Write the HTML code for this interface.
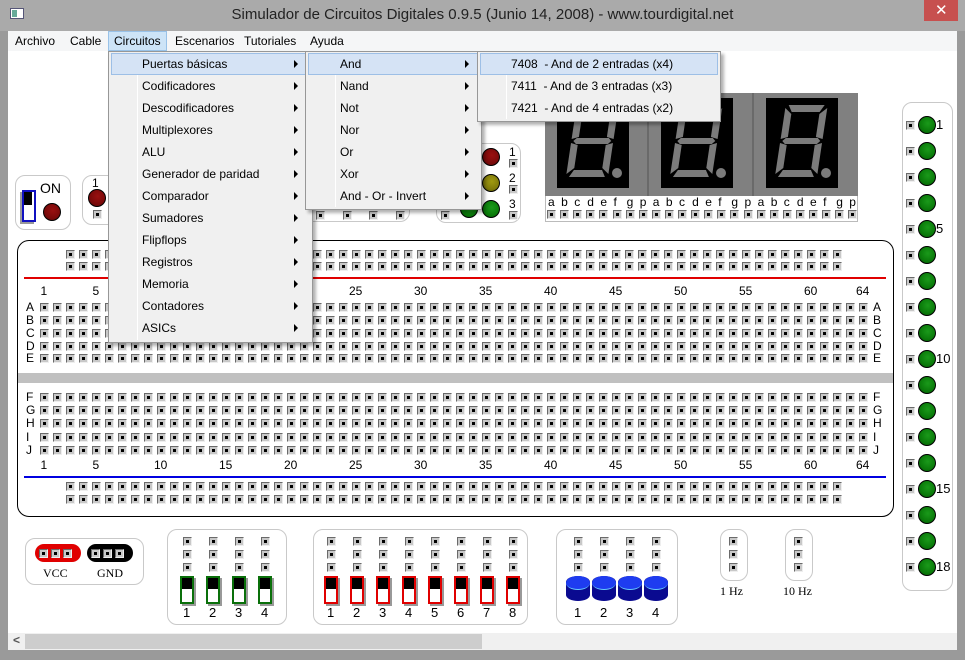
<!DOCTYPE html>
<html><head><meta charset="utf-8"><style>
*{margin:0;padding:0;box-sizing:border-box}
body{width:965px;height:660px;overflow:hidden;background:#aaaaaa;font-family:"Liberation Sans",sans-serif;position:relative}
.a{position:absolute}
.h{position:absolute;width:9px;height:9px;background:#c8c8c8;border:1px solid #6a6a6a;border-right-color:#eee;border-bottom-color:#eee}
.h::after{content:"";position:absolute;left:2px;top:2px;width:3px;height:3px;background:#000}
.box{position:absolute;border:1px solid #c9c9c9;border-radius:10px;background:transparent}
.t{position:absolute;font-size:13px;color:#000;white-space:nowrap}
.led{position:absolute;width:18px;height:18px;border-radius:50%;border:1px solid #000}
.g{background:radial-gradient(circle at 55% 40%,#1a9a1a 0,#0a7a0a 60%,#064d06 100%)}
.r{background:radial-gradient(circle at 55% 40%,#9a1010 0,#7a0a0a 60%,#4d0606 100%)}
.y{background:radial-gradient(circle at 55% 40%,#a09a10 0,#807a0a 60%,#4d4d06 100%)}
.sw{position:absolute;width:14px;height:28px;border:2px solid;background:#fff;box-shadow:2px 2px 0 #999}
.sw::before{content:"";position:absolute;left:0;top:0;width:10px;height:11px;background:#000}
.menu{position:absolute;background:#f0f0f0;border:1px solid #979797;box-shadow:3px 3px 3px rgba(0,0,0,.3);font-size:12px}
.menu .gut{position:absolute;top:2px;bottom:2px;width:1px;background:#e2e3e3;border-right:1px solid #fff}
.mi{position:absolute;height:22px;line-height:22px;color:#000;white-space:nowrap}
.hl{position:absolute;height:22px;background:#d5e3f5;border:1px solid #9dbfe6}
.arr{position:absolute;width:0;height:0;border-left:4px solid #000;border-top:4px solid transparent;border-bottom:4px solid transparent}
.serif{font-family:"Liberation Serif",serif}
</style></head><body>
<div class="a" style="left:0;top:0;width:965px;height:31px;background:#aaaaaa"></div>
<div class="a" style="left:10px;top:8px;width:14px;height:11px;background:#fff;border:1px solid #557"></div>
<div class="a" style="left:12px;top:10px;width:5px;height:7px;background:#6a9"></div>
<div class="t" style="left:0;width:965px;text-align:center;top:6px;font-size:15px;color:#222">Simulador de Circuitos Digitales 0.9.5 (Junio 14, 2008) - www.tourdigital.net</div>
<div class="a" style="left:924px;top:0;width:34px;height:21px;background:#c7504f"></div>
<div class="t" style="left:935px;top:1px;color:#fff;font-size:15px">✕</div>
<div class="a" style="left:8px;top:31px;width:949px;height:20px;background:#f5f6f7"></div>
<div class="a" style="left:108px;top:31px;width:59px;height:20px;background:#cde4f7;border:1px solid #99c2e8"></div>
<div class="t" style="left:15px;top:34px;font-size:12px">Archivo</div>
<div class="t" style="left:70px;top:34px;font-size:12px">Cable</div>
<div class="t" style="left:114px;top:34px;font-size:12px">Circuitos</div>
<div class="t" style="left:175px;top:34px;font-size:12px">Escenarios</div>
<div class="t" style="left:244px;top:34px;font-size:12px">Tutoriales</div>
<div class="t" style="left:310px;top:34px;font-size:12px">Ayuda</div>
<div class="a" style="left:8px;top:51px;width:949px;height:582px;background:#fff"></div>
<div class="a" style="left:8px;top:633px;width:949px;height:17px;background:#f0f0f0"></div>
<div class="a" style="left:25px;top:634px;width:457px;height:15px;background:#cdcdcd"></div>
<div class="t" style="left:13px;top:633px;font-size:12px;color:#555;font-weight:bold">&lt;</div>
<div class="a" style="left:0;top:650px;width:965px;height:10px;background:#9a9a9a"></div>
<div class="a" style="left:957px;top:31px;width:8px;height:620px;background:#9a9a9a"></div>
<div class="a" style="left:0;top:31px;width:8px;height:620px;background:#9a9a9a"></div>

<div class="box" style="left:17px;top:240px;width:877px;height:277px;border:1px solid #000;border-radius:12px"></div>
<div class="a" style="left:18px;top:373px;width:875px;height:10px;background:#c0c0c0"></div>
<div class="a" style="left:24px;top:277px;width:862px;height:2px;background:#e00000"></div>
<div class="a" style="left:24px;top:476px;width:862px;height:2px;background:#0000e0"></div>

<div class="a" style="left:545px;top:93px;width:313px;height:129px;border:1px solid #bbb;background:#fff"></div>
<div class="a" style="left:545px;top:93px;width:313px;height:103px;background:#808080"></div>
<svg class="a" style="left:545px;top:93px" width="313" height="103" id="seg"></svg>

<div class="box" style="left:15px;top:175px;width:56px;height:55px"></div>
<div class="a" style="left:22px;top:190px;width:14px;height:32px;border:2px solid #1010c0;background:#fff;box-shadow:-2px 2px 0 #999"></div>
<div class="a" style="left:24px;top:192px;width:8px;height:13px;background:#000"></div>
<div class="t" style="left:40px;top:180px;font-size:14px">ON</div>
<div class="led r" style="left:43px;top:203px"></div>
<div class="box" style="left:82px;top:175px;width:60px;height:50px"></div>
<div class="t" style="left:92px;top:176px;font-size:12px">1</div>
<div class="led r" style="left:88px;top:189px"></div>
<div class="box" style="left:295px;top:180px;width:115px;height:42px"></div>
<div class="box" style="left:436px;top:143px;width:85px;height:80px"></div>
<div class="led r" style="left:482px;top:148px"></div>
<div class="led y" style="left:482px;top:174px"></div>
<div class="led g" style="left:482px;top:200px"></div>
<div class="led g" style="left:460px;top:200px"></div>
<div class="t" style="left:509px;top:145px;font-size:12px">1</div>
<div class="t" style="left:509px;top:171px;font-size:12px">2</div>
<div class="t" style="left:509px;top:197px;font-size:12px">3</div>

<div class="box" style="left:902px;top:102px;width:51px;height:489px"></div>

<div class="box" style="left:25px;top:538px;width:119px;height:47px"></div>
<div class="a" style="left:35px;top:544px;width:46px;height:18px;background:#e00000;border-radius:9px"></div>
<div class="a" style="left:87px;top:544px;width:46px;height:18px;background:#000;border-radius:9px"></div>
<div class="t serif" style="left:43px;top:566px;font-size:12px">VCC</div>
<div class="t serif" style="left:97px;top:566px;font-size:12px">GND</div>
<div class="box" style="left:167px;top:529px;width:120px;height:96px"></div>
<div class="box" style="left:313px;top:529px;width:215px;height:96px"></div>
<div class="box" style="left:556px;top:529px;width:122px;height:96px"></div>
<div class="box" style="left:720px;top:529px;width:28px;height:52px"></div>
<div class="box" style="left:785px;top:529px;width:28px;height:52px"></div>
<div class="t serif" style="left:720px;top:584px;font-size:12px">1 Hz</div>
<div class="t serif" style="left:783px;top:584px;font-size:12px">10 Hz</div>
<div id="bb"></div>
<div id="bc"></div>

<div class="menu" style="left:108px;top:51px;width:205px;height:292px">
<div class="gut" style="left:28px"></div>
<div class="hl" style="left:2px;top:1px;width:199px"></div>
</div>
<div class="menu" style="left:305px;top:51px;width:177px;height:159px">
<div class="gut" style="left:29px"></div>
<div class="hl" style="left:2px;top:1px;width:171px"></div>
</div>
<div class="menu" style="left:477px;top:51px;width:244px;height:71px">
<div class="gut" style="left:28px"></div>
<div class="hl" style="left:2px;top:1px;width:238px"></div>
</div>
<div id="mn"></div>

<script>
var H='';
function h(x,y){H+='<div class="h" style="left:'+(x-4)+'px;top:'+(y-4)+'px"></div>';}
function t(x,y,s,st){H+='<div class="t" style="left:'+x+'px;top:'+y+'px;'+(st||'')+'">'+s+'</div>';}
var cx=function(c){return 44+(c-1)*13;};
for(var c=3;c<=62;c++){h(cx(c),254);h(cx(c),266);h(cx(c),486);h(cx(c),499);}
var ra=[307,320,333,346,358],rb=[397,410,423,437,450],L1='ABCDE',L2='FGHIJ';
for(var r=0;r<5;r++){for(var c=1;c<=64;c++){h(cx(c),ra[r]);h(cx(c),rb[r]);}
t(26,ra[r]-7,L1[r],'font-size:12px');t(873,ra[r]-7,L1[r],'font-size:12px');
t(26,rb[r]-7,L2[r],'font-size:12px');t(873,rb[r]-7,L2[r],'font-size:12px');}
var nums=[1,5,10,15,20,25,30,35,40,45,50,55,60,64];
nums.forEach(function(n){var w=String(n).length*7;t(cx(n)-w/2,284,n,'font-size:12px');t(cx(n)-w/2,458,n,'font-size:12px');});
var lb='abcdefgp';for(var i=0;i<24;i++){var x=551+i*13.1;t(x-3,195,lb[i%8],'font-size:12px');h(Math.round(x),214);}
h(97,214);h(320,215);h(347,215);h(373,215);h(400,215);h(513,163);h(513,189);h(513,215);h(445,215);
for(var i=0;i<18;i++){var y=125+i*26;h(910,y);H+='<div class="led g" style="left:918px;top:'+(y-9)+'px"></div>';}
[[1,0],[5,4],[10,9],[15,14],[18,17]].forEach(function(p){t(936,125+p[1]*26-8,p[0],'font-size:13px');});
document.getElementById('bb').innerHTML=H;H='';
[43,55,67,95,107,119].forEach(function(x){h(x,553);});
for(var i=0;i<4;i++){var x=187+i*26;h(x,541);h(x,554);h(x,567);H+='<div class="sw" style="left:'+(x-7)+'px;top:576px;border-color:#0a700a"></div>';t(x-4,605,i+1);}
for(var i=0;i<8;i++){var x=331+i*26;h(x,541);h(x,554);h(x,567);H+='<div class="sw" style="left:'+(x-7)+'px;top:576px;border-color:#e00000"></div>';t(x-4,605,i+1);}
for(var i=0;i<4;i++){var x=578+i*26;h(x,541);h(x,554);h(x,567);
H+='<div class="a" style="left:'+(x-12)+'px;top:576px;width:24px;height:25px;background:#0a0a90;border-radius:12px/6px"></div><div class="a" style="left:'+(x-12)+'px;top:576px;width:24px;height:14px;background:#1e3cf0;border-radius:12px/7px;border-bottom:1px solid #6cf"></div>';t(x-4,605,i+1);}
[733,798].forEach(function(x){h(x,541);h(x,554);h(x,567);});
document.getElementById('bc').innerHTML=H;H='';
var m1=['Puertas básicas','Codificadores','Descodificadores','Multiplexores','ALU','Generador de paridad','Comparador','Sumadores','Flipflops','Registros','Memoria','Contadores','ASICs'];
m1.forEach(function(s,i){H+='<div class="mi" style="left:142px;top:'+(53+i*22)+'px;font-size:12px">'+s+'</div><div class="arr" style="left:294px;top:'+(60+i*22)+'px"></div>';});
['And','Nand','Not','Nor','Or','Xor','And - Or - Invert'].forEach(function(s,i){H+='<div class="mi" style="left:340px;top:'+(53+i*22)+'px;font-size:12px">'+s+'</div><div class="arr" style="left:465px;top:'+(60+i*22)+'px"></div>';});
['7408&nbsp; - And de 2 entradas (x4)','7411&nbsp; - And de 3 entradas (x3)','7421&nbsp; - And de 4 entradas (x2)'].forEach(function(s,i){H+='<div class="mi" style="left:511px;top:'+(53+i*22)+'px;font-size:12px">'+s+'</div>';});
document.getElementById('mn').innerHTML=H;
var S='';
[[0,103],[103,105],[208,105]].forEach(function(d,k){var o=d[0];
if(k>0)S+='<rect x="'+(o-1)+'" y="0" width="2" height="103" fill="#6a6a6a"/>';
var bx=o+12+(k?1:0);S+='<rect x="'+bx+'" y="5" width="72" height="90" fill="#000"/>';
var X=bx+6,sk=0.15,col='#7b7b7b';
function P(pts){return '<polygon fill="'+col+'" points="'+pts.map(function(p){return (X+p[0]+(90-p[1])*sk).toFixed(1)+','+p[1];}).join(' ')+'"/>';}
var top=12,mid=48,bot=84,l=2,r=44,w=7;
S+=P([[l+3,top],[r-3,top],[r-7,top+w],[l+7,top+w]]);
S+=P([[l+5,mid-3],[r-5,mid-3],[r-2,mid],[r-5,mid+3],[l+5,mid+3],[l+2,mid]]);
S+=P([[l+3,bot],[r-3,bot],[r-7,bot-w],[l+7,bot-w]]);
S+=P([[l,top+3],[l+w,top+9],[l+w,mid-4],[l,mid-2]]);
S+=P([[r,top+3],[r-w,top+9],[r-w,mid-4],[r,mid-2]]);
S+=P([[l,mid+2],[l+w,mid+4],[l+w,bot-9],[l,bot-3]]);
S+=P([[r,mid+2],[r-w,mid+4],[r-w,bot-9],[r,bot-3]]);
S+='<circle cx="'+(X+r+10)+'" cy="'+(bot-4)+'" r="5" fill="'+col+'"/>';});
document.getElementById('seg').innerHTML=S;
</script>
</body></html>
